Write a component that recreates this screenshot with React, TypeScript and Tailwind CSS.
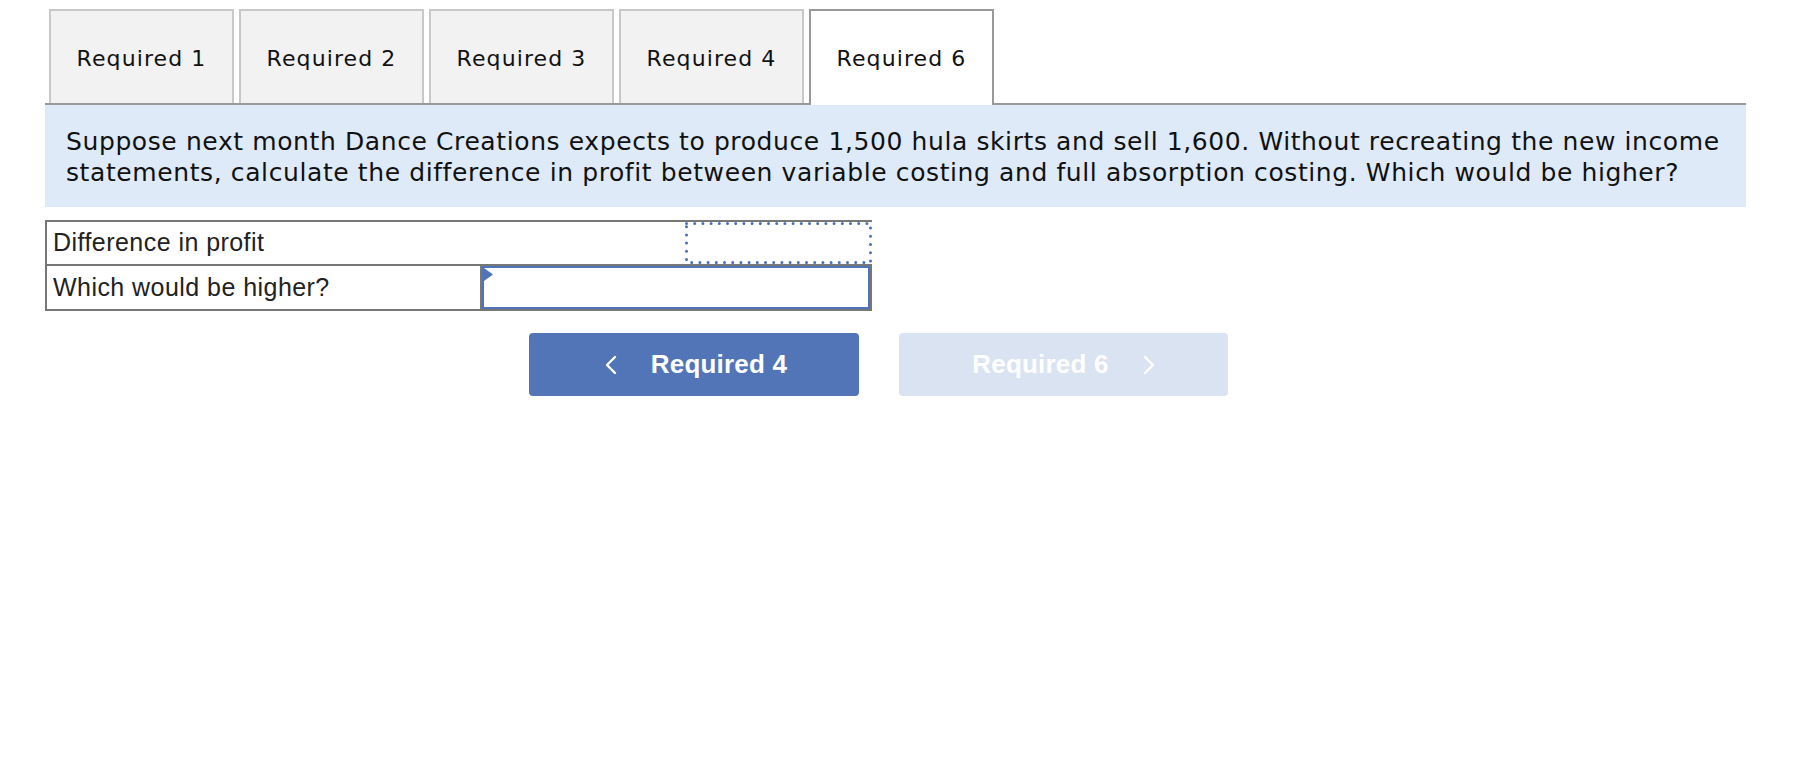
import React from 'react';

const TABS = ['Required 1', 'Required 2', 'Required 3', 'Required 4', 'Required 6'];
const ACTIVE = 'Required 6';

function Chevron({ dir }: { dir: 'left' | 'right' }) {
  return (
    <svg width="12" height="20" viewBox="0 0 12 20" fill="none" className="shrink-0">
      <polyline
        points={dir === 'left' ? '10,2 2,10 10,18' : '2,2 10,10 2,18'}
        stroke="white"
        strokeWidth="2.4"
        strokeLinecap="round"
        strokeLinejoin="round"
      />
    </svg>
  );
}

function DottedBox() {
  return (
    <div className="relative z-10 -mr-[2px] h-full w-[187px] bg-white">
      <svg className="absolute inset-0" width="187" height="42">
        <rect
          x="1.5"
          y="1.5"
          width="184"
          height="39"
          fill="none"
          stroke="#4a70b7"
          strokeWidth="3"
          strokeDasharray="0 8.2"
          strokeLinecap="round"
        />
      </svg>
    </div>
  );
}

export default function App() {
  return (
    <div className="min-h-[775px] bg-white px-[45px] pt-[9px]">
      {/* tab strip */}
      <div className="flex w-[1701px] items-end gap-[5px] border-b-2 border-[#999] pl-[4px]">
        {TABS.map((tab) =>
          tab === ACTIVE ? (
            <div
              key={tab}
              className="relative z-10 -mb-[2px] flex h-[96px] w-[185px] items-center justify-center border-2 border-b-0 border-[#999] bg-white font-['DejaVu_Sans',sans-serif] text-[22px] tracking-[1.1px] text-[#111]"
            >
              {tab}
            </div>
          ) : (
            <div
              key={tab}
              className="flex h-[94px] w-[185px] items-center justify-center border-2 border-b-0 border-[#c8c8c8] bg-[#f2f2f2] pt-[2px] font-['DejaVu_Sans',sans-serif] text-[22px] tracking-[1.1px] text-[#111]"
            >
              {tab}
            </div>
          )
        )}
      </div>

      {/* question */}
      <div className="w-[1701px] bg-[#deeaf8] pb-[19px] pl-[21px] pr-[12px] pt-[21px] font-['DejaVu_Sans',sans-serif] text-[25px] leading-[31px] tracking-[0.6px] text-[#111]">
        Suppose next month Dance Creations expects to produce 1,500 hula skirts and sell 1,600. Without recreating the new income
        statements, calculate the difference in profit between variable costing and full absorption costing. Which would be higher?
      </div>

      {/* answer table */}
      <div className="mt-[13px] w-[827px] border-2 border-[#777] font-['Liberation_Sans',Arial,sans-serif] text-[25px] tracking-[0.45px] text-[#222]">
        <div className="flex h-[44px] border-b-2 border-[#777]">
          <div className="flex flex-1 items-center pl-[6px]">Difference in profit</div>
          <DottedBox />
        </div>
        <div className="flex h-[43px]">
          <div className="flex w-[435px] items-center border-r-2 border-[#777] pl-[6px]">Which would be higher?</div>
          <div className="relative flex-1 border-2 border-[#4f74b9] bg-white">
            <svg className="absolute left-0 top-0" width="9" height="13" viewBox="0 0 9 13">
              <polygon points="0,0 9,6.5 0,13" fill="#4f74b9" />
            </svg>
          </div>
        </div>
      </div>

      {/* navigation */}
      <div className="ml-[484px] mt-[22px] flex gap-[40px] font-['Liberation_Sans',Arial,sans-serif] text-[26px] font-bold tracking-[0.2px] text-white">
        <button
          type="button"
          className="flex h-[63px] w-[330px] items-center justify-center gap-[34px] rounded-[4px] bg-[#5275b7] pl-[4px]"
        >
          <Chevron dir="left" />
          <span>Required 4</span>
        </button>
        <button
          type="button"
          className="flex h-[63px] w-[329px] items-center justify-center gap-[34px] rounded-[4px] bg-[#dae3f1]"
        >
          <span>Required 6</span>
          <Chevron dir="right" />
        </button>
      </div>
    </div>
  );
}
